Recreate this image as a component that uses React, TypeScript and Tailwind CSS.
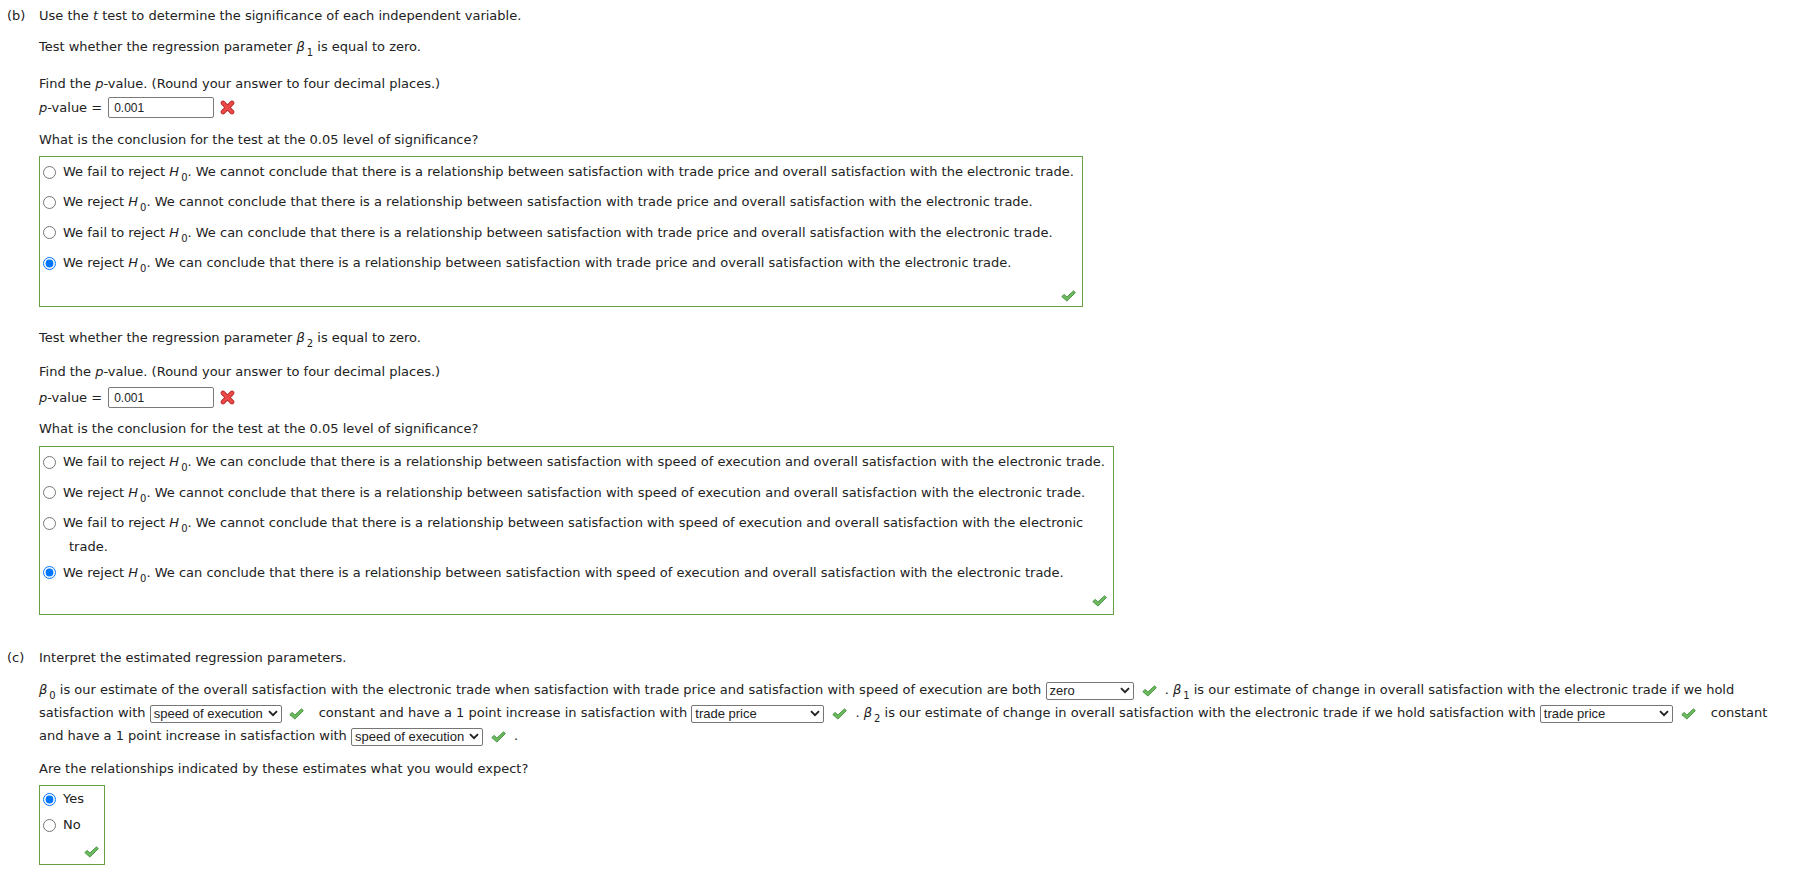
import React from 'react';

const Sub: React.FC<{ children: React.ReactNode }> = ({ children }) => (
  <span className="relative top-[5px] ml-[2px] text-[10px] leading-none">{children}</span>
);

const Beta: React.FC<{ n: string }> = ({ n }) => (
  <span className="whitespace-nowrap">
    <i>β</i>
    <Sub>{n}</Sub>
  </span>
);

const H0 = () => (
  <span className="whitespace-nowrap">
    <i>H</i>
    <Sub>0</Sub>
  </span>
);

const CheckMark: React.FC<{ className?: string }> = ({ className = '' }) => (
  <svg width="15" height="12" viewBox="0 0 15 12" className={className}>
    <path
      d="M0.8 6.6 L3.2 4.4 L5.9 7.0 L12.6 0.8 L14.3 2.7 L5.9 11.0 Z"
      fill="#6dbb5f"
      stroke="#3f8c3a"
      strokeWidth="0.9"
      strokeLinejoin="round"
    />
  </svg>
);

const RedX = () => (
  <svg width="15" height="15" viewBox="0 0 15 15" className="ml-[6px]">
    <path d="M3 3 L12 12 M12 3 L3 12" stroke="#b92a2a" strokeWidth="4.6" strokeLinecap="round" />
    <path d="M3 3 L12 12 M12 3 L3 12" stroke="#ec4a48" strokeWidth="3" strokeLinecap="round" />
  </svg>
);

const AnswerInput: React.FC<{ value: string }> = ({ value }) => (
  <span className="inline-flex items-center w-[106px] h-[21px] border border-[#7a7a7a] rounded-[2px] pl-[5px] font-['Liberation_Sans',Arial,sans-serif] text-[12px] text-[#222]">
    {value}
  </span>
);

const Select: React.FC<{ value: string; width: string }> = ({ value, width }) => (
  <span
    className={`inline-flex items-center justify-between h-[18px] align-middle border border-[#767676] rounded-[2px] pl-[3px] pr-[3px] font-['Liberation_Sans',Arial,sans-serif] text-[13px] leading-none text-[#222] ${width}`}
  >
    <span>{value}</span>
    <svg width="10" height="7" viewBox="0 0 10 7">
      <path d="M1 1.2 L5 5.2 L9 1.2" fill="none" stroke="#222" strokeWidth="1.9" />
    </svg>
  </span>
);

const Radio: React.FC<{ name: string; checked?: boolean }> = ({ name, checked = false }) => (
  <input
    type="radio"
    name={name}
    defaultChecked={checked}
    className="m-0 ml-[3px] mr-[7px] w-[13px] h-[13px] shrink-0"
  />
);

const Row: React.FC<{ name: string; checked?: boolean; children: React.ReactNode }> = ({
  name,
  checked,
  children,
}) => (
  <div className="flex items-center h-[30.3px] pr-[8px]">
    <Radio name={name} checked={checked} />
    <span className="leading-[22px] whitespace-nowrap">{children}</span>
  </div>
);

const TallRow: React.FC<{ name: string; children: React.ReactNode }> = ({ name, children }) => (
  <div className="flex items-start h-[50px] pt-[3px] pr-[8px]">
    <span className="flex mt-[6px]">
      <Radio name={name} />
    </span>
    <span className="leading-[24px] whitespace-nowrap">{children}</span>
  </div>
);

const rel1 = 'a relationship between satisfaction with trade price and overall satisfaction with the electronic trade.';
const rel2 = 'a relationship between satisfaction with speed of execution and overall satisfaction with the electronic trade.';

export default function App() {
  return (
    <div className="w-[1795px] min-h-[880px] bg-white text-[13px] leading-5 text-[#222] font-['DejaVu_Sans',Verdana,sans-serif]">
      {/* part b */}
      <div className="flex pl-[7px] pt-[6px]">
        <div className="w-[32px] shrink-0">(b)</div>
        <div className="flex flex-col items-start">
          <p>
            Use the <i>t</i> test to determine the significance of each independent variable.
          </p>
          <p className="mt-[11px]">
            Test whether the regression parameter <Beta n="1" /> is equal to zero.
          </p>
          <p className="mt-[17px]">
            Find the <i>p</i>-value. (Round your answer to four decimal places.)
          </p>
          <div className="mt-[3px] flex items-center h-[21px]">
            <span className="mr-[6px]">
              <i>p</i>-value =
            </span>
            <AnswerInput value="0.001" />
            <RedX />
          </div>
          <p className="mt-[12px]">What is the conclusion for the test at the 0.05 level of significance?</p>
          <div className="mt-[6px] flex flex-col border border-[#69a045]">
            <Row name="q1">
              We fail to reject <H0 />. We cannot conclude that there is {rel1}
            </Row>
            <Row name="q1">
              We reject <H0 />. We cannot conclude that there is {rel1}
            </Row>
            <Row name="q1">
              We fail to reject <H0 />. We can conclude that there is {rel1}
            </Row>
            <Row name="q1" checked>
              We reject <H0 />. We can conclude that there is {rel1}
            </Row>
            <div className="h-[28px] flex justify-end items-end pb-[4px] pr-[6px]">
              <CheckMark />
            </div>
          </div>

          <p className="mt-[21px]">
            Test whether the regression parameter <Beta n="2" /> is equal to zero.
          </p>
          <p className="mt-[14px]">
            Find the <i>p</i>-value. (Round your answer to four decimal places.)
          </p>
          <div className="mt-[5px] flex items-center h-[21px]">
            <span className="mr-[6px]">
              <i>p</i>-value =
            </span>
            <AnswerInput value="0.001" />
            <RedX />
          </div>
          <p className="mt-[11px]">What is the conclusion for the test at the 0.05 level of significance?</p>
          <div className="mt-[7px] flex flex-col border border-[#69a045]">
            <Row name="q2">
              We fail to reject <H0 />. We can conclude that there is {rel2}
            </Row>
            <Row name="q2">
              We reject <H0 />. We cannot conclude that there is {rel2}
            </Row>
            <TallRow name="q2">
              We fail to reject <H0 />. We cannot conclude that there is a relationship between satisfaction with
              speed of execution and overall satisfaction with the electronic
              <br />
              <span className="pl-[6px]">trade.</span>
            </TallRow>
            <Row name="q2" checked>
              We reject <H0 />. We can conclude that there is {rel2}
            </Row>
            <div className="h-[26px] flex justify-end items-end pb-[7px] pr-[6px]">
              <CheckMark />
            </div>
          </div>
        </div>
      </div>

      {/* part c */}
      <div className="flex pl-[7px] mt-[33px]">
        <div className="w-[32px] shrink-0">(c)</div>
        <div className="flex flex-col items-start">
          <p>Interpret the estimated regression parameters.</p>
          <p className="mt-[10px] leading-[23px] whitespace-nowrap">
            <Beta n="0" /> is our estimate of the overall satisfaction with the electronic trade when satisfaction with
            trade price and satisfaction with speed of execution are both <Select value="zero" width="w-[88px]" />
            <CheckMark className="inline-block align-middle ml-[8px] mr-[4px]" /> . <Beta n="1" /> is our estimate of
            change in overall satisfaction with the electronic trade if we hold
            <br />
            satisfaction with <Select value="speed of execution" width="w-[132px]" />
            <CheckMark className="inline-block align-middle ml-[7px]" />
            <span className="ml-[15px]">constant and have a 1 point increase in satisfaction with</span>{' '}
            <Select value="trade price" width="w-[133px]" />
            <CheckMark className="inline-block align-middle ml-[8px] mr-[4px]" /> . <Beta n="2" /> is our estimate of
            change in overall satisfaction with the electronic trade if we hold satisfaction with{' '}
            <Select value="trade price" width="w-[133px]" />
            <CheckMark className="inline-block align-middle ml-[8px]" />
            <span className="ml-[15px]">constant</span>
            <br />
            and have a 1 point increase in satisfaction with <Select value="speed of execution" width="w-[132px]" />
            <CheckMark className="inline-block align-middle ml-[8px] mr-[4px]" /> .
          </p>
          <p className="mt-[12px]">Are the relationships indicated by these estimates what you would expect?</p>
          <div className="mt-[6px] flex flex-col border border-[#69a045] w-[66px]">
            <div className="flex items-center h-[26px]">
              <Radio name="q3" checked />
              <span>Yes</span>
            </div>
            <div className="flex items-center h-[26px]">
              <Radio name="q3" />
              <span>No</span>
            </div>
            <div className="h-[26px] flex justify-end items-end pb-[6px] pr-[5px]">
              <CheckMark />
            </div>
          </div>
        </div>
      </div>
    </div>
  );
}
